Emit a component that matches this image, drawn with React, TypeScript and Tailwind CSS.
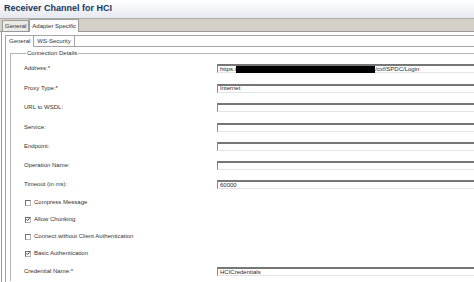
import type { ReactNode } from 'react';

const font = { fontFamily: '"Liberation Sans", Arial, sans-serif' };

function Field({ children }: { children?: ReactNode }) {
  return (
    <div className="w-[300px] h-[9px] shrink-0 bg-white border-t-2 border-l border-b border-t-[#767676] border-l-[#888] border-b-[#e4e4e4] flex items-center pl-[2px] text-[6px] leading-[7px] text-[#2a2a2a] whitespace-nowrap">
      {children}
    </div>
  );
}

function Row({ label, h, children }: { label: string; h: string; children?: ReactNode }) {
  return (
    <div className={`flex items-center ${h}`}>
      <div className="w-[193px] shrink-0 text-[6px] text-[#333]">{label}</div>
      <Field>{children}</Field>
    </div>
  );
}

function Check({ label, checked, h }: { label: string; checked?: boolean; h: string }) {
  return (
    <div className={`flex items-center ${h}`}>
      <span className="w-[6px] h-[6px] ml-[1px] mr-[3px] bg-white border border-t-[#6f6f6f] border-l-[#6f6f6f] border-r-[#b5b5b5] border-b-[#b5b5b5] flex items-center justify-center">
        {checked && (
          <svg width="5" height="5" viewBox="0 0 5 5">
            <path d="M0.6 2.2 L2 3.7 L4.5 0.8" fill="none" stroke="#222" strokeWidth="1.1" />
          </svg>
        )}
      </span>
      <span className="text-[6px] text-[#333]">{label}</span>
    </div>
  );
}

export default function App() {
  return (
    <div className="w-[474px] h-[282px] overflow-hidden bg-white flex flex-col" style={font}>
      {/* title */}
      <div className="h-[18px] shrink-0 flex items-center pl-[4px] bg-gradient-to-b from-white to-[#e6e8f1]">
        <span className="text-[9px] font-bold text-[#1a365c]">Receiver Channel for HCI</span>
      </div>

      {/* outer tabs */}
      <div className="h-[14px] shrink-0 bg-[#d4d0c8] border-t border-t-[#aeaca6] border-b border-b-[#989898] flex items-end pl-[2px]">
        <div className="h-[11px] px-[2px] bg-[#ebe9e3] border border-b-0 border-[#9d9d9d] flex items-center text-[6px] text-[#333]">General</div>
        <div className="h-[13px] px-[2px] -mb-px bg-[#fbfbfb] border border-b-0 border-[#9d9d9d] flex items-center text-[6px] text-[#333]">Adapter Specific</div>
      </div>

      {/* outer panel */}
      <div className="flex-1 ml-[1px] border-l border-[#9a9a9a] pl-[3px] pt-[3px] flex flex-col">
        <div className="flex-1 border-l border-[#a4a4a4] flex flex-col">
          {/* inner tabs */}
          <div className="h-[12px] shrink-0 border-t border-b border-[#a6a6a6] flex">
            <div className="h-[11px] px-[3px] bg-white border-r border-[#a6a6a6] flex items-center text-[6px] text-[#333]">General</div>
            <div className="h-[10px] px-[3px] border-r border-[#a6a6a6] flex items-center text-[6px] text-[#333]">WS-Security</div>
          </div>

          {/* group box */}
          <fieldset className="ml-[4px] mt-[3px] border-l border-t border-[#b4b4b4] pl-[13px] pt-[2px]">
            <legend className="ml-[2px] px-[1px] text-[6px] leading-[7px] text-[#333]">Connection Details</legend>
            <Row label="Address:*" h="h-[19px]">
              <span>https:/</span>
              <span className="w-[139px] h-[7px] bg-black inline-block shrink-0" />
              <span>/cxf/SPDC/Login</span>
            </Row>
            <Row label="Proxy Type:*" h="h-[20px]">Internet</Row>
            <Row label="URL to WSDL:" h="h-[19px]" />
            <Row label="Service:" h="h-[20px]" />
            <Row label="Endpoint:" h="h-[19px]" />
            <Row label="Operation Name:" h="h-[19px]" />
            <Row label="Timeout (in ms):" h="h-[19px]">60000</Row>
            <Check label="Compress Message" h="h-[17px]" />
            <Check label="Allow Chunking" checked h="h-[17px]" />
            <Check label="Connect without Client Authentication" h="h-[17px]" />
            <Check label="Basic Authentication" checked h="h-[17px]" />
            <Row label="Credential Name:*" h="h-[19px]">HCICredentials</Row>
          </fieldset>
        </div>
      </div>
    </div>
  );
}
